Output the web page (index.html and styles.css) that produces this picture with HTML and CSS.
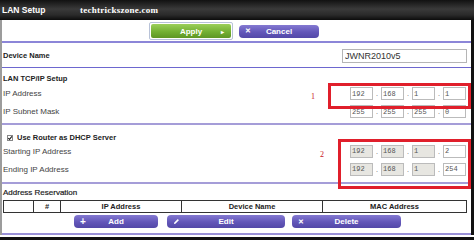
FILE: index.html
```html
<!DOCTYPE html>
<html>
  <head>
    <meta name="viewport" content="width=device-width, initial-scale=1.0" />
    <title>LAN Setup</title>
    <link rel="stylesheet" href="styles.css">
  </head>
  <body>
    <div class="page">
      <div class="topbar">
        <span class="title">LAN Setup</span>
        <span class="site">techtrickszone.com</span>
      </div>

      <div class="panel">
        <div class="actions">
          <span class="apply-wrap">
            <button class="btn green"><span></span><span class="label">Apply</span><span class="ico">&#9656;</span></button>
          </span>
          <button class="btn purple cancel"><span class="ico">&#10005;</span><span class="label">Cancel</span><span></span></button>
        </div>

        <div class="device">
          <span class="heading">Device Name</span>
          <input class="text-input" value="JWNR2010v5" />
        </div>

        <div class="lan">
          <div class="heading row-head">LAN TCP/IP Setup</div>
          <div class="ip-row">
            <span class="label-text">IP Address</span>
            <span class="ip">
              <input value="192" /><i>.</i><input value="168" /><i>.</i><input value="1" /><i>.</i><input value="1" />
            </span>
          </div>
          <div class="ip-row gap">
            <span class="label-text">IP Subnet Mask</span>
            <span class="ip">
              <input value="255" /><i>.</i><input value="255" /><i>.</i><input value="255" /><i>.</i><input value="0" />
            </span>
          </div>
        </div>

        <div class="dhcp">
          <div class="heading check-row">
            <svg class="check" width="6" height="6" viewBox="0 0 6 6">
              <rect x="0.5" y="0.5" width="5" height="5" fill="#fff" stroke="#888" />
              <path d="M1.2 3 L2.5 4.4 L4.9 1.3" fill="none" stroke="#222" stroke-width="1.1" />
            </svg>
            Use Router as DHCP Server
          </div>
          <div class="ip-row tight">
            <span class="label-text">Starting IP Address</span>
            <span class="ip">
              <input class="off" value="192" /><i>.</i><input class="off" value="168" /><i>.</i><input class="off" value="1" /><i>.</i><input value="2" />
            </span>
          </div>
          <div class="ip-row tight gap2">
            <span class="label-text">Ending IP Address</span>
            <span class="ip">
              <input class="off" value="192" /><i>.</i><input class="off" value="168" /><i>.</i><input class="off" value="1" /><i>.</i><input value="254" />
            </span>
          </div>
        </div>

        <div class="reserve">
          <div class="heading res-title">Address Reservation</div>
          <div class="table">
            <span></span><span>#</span><span>IP Address</span><span>Device Name</span><span>MAC Address</span>
          </div>
          <div class="res-buttons">
            <button class="btn purple add"><span class="ico">+</span><span class="label">Add</span><span></span></button>
            <button class="btn purple edit">
              <span class="ico">
                <svg width="7" height="7" viewBox="0 0 7 7"><path d="M1 6 L1.3 4.6 L4.8 1.1 L5.9 2.2 L2.4 5.7 Z" fill="#fff" /></svg>
              </span><span class="label">Edit</span><span></span>
            </button>
            <button class="btn purple delete"><span class="ico">&#10005;</span><span class="label">Delete</span><span></span></button>
          </div>
        </div>
      </div>
      <div class="footer"></div>

      <!-- annotations drawn over the screenshot -->
      <div class="mark mark-one"></div>
      <div class="mark mark-two"></div>
      <span class="num num-one">1</span>
      <span class="num num-two">2</span>
    </div>
  </body>
</html>
```

FILE: styles.css
```css
body {
  margin: 0;
  background: #fff;
  font-family: "Liberation Sans", Arial, sans-serif;
  font-size: 7.5px;
  color: #333;
}

.page {
  position: relative;
  width: 474px;
  height: 243px;
  overflow: hidden;
}

.topbar {
  height: 20px;
  display: flex;
  align-items: center;
  background: linear-gradient(#111 0%, #3a3a3a 45%, #2a2a2a 75%, #0c0c0c 100%);
  color: #fff;
  font-weight: bold;
}
.topbar .title {
  margin-left: 2px;
  font-size: 8.5px;
  width: 78px;
}
.topbar .site {
  font-family: "Liberation Serif", "Times New Roman", serif;
  font-size: 9px;
  letter-spacing: 0.25px;
}

.panel {
  border-left: 2px solid #9c9c9c;
  border-right: 3px solid #111;
  background: #fff;
}

/* top buttons */
.actions {
  height: 23px;
  box-sizing: border-box;
  display: flex;
  align-items: center;
  padding-left: 147px;
  padding-top: 1px;
  border-bottom: 2px solid #8c86d8;
}
.apply-wrap {
  border: 1px solid #b8c2d8;
  padding: 1px;
  border-radius: 2px;
  display: flex;
}
.btn {
  display: grid;
  grid-template-columns: 12px 1fr 12px;
  align-items: center;
  height: 14px;
  padding: 0 3px;
  border: none;
  border-radius: 4px;
  color: #fff;
  font-family: "Liberation Sans", Arial, sans-serif;
  font-weight: bold;
  font-size: 8px;
}
.btn .ico {
  display: flex;
  justify-content: center;
  font-size: 7px;
}
.btn .label {
  text-align: center;
}
.green {
  width: 80px;
  background: linear-gradient(#9ccf5a, #73b033 55%, #5e9624);
  border-radius: 2px;
}
.green .ico {
  font-size: 6px;
}
.purple {
  background: linear-gradient(#8479d2, #6256b8 55%, #5348a8);
}
.cancel {
  width: 80px;
  margin-left: 6px;
  height: 13px;
}

.heading {
  font-weight: bold;
  color: #222;
}
.label-text {
  color: #444;
  font-size: 8px;
}

/* device name */
.device {
  height: 25px;
  box-sizing: border-box;
  display: flex;
  align-items: center;
  justify-content: space-between;
  padding: 0 4px 0 1px;
  border-bottom: 1px solid #6d67cf;
}
.text-input {
  width: 125px;
  height: 14px;
  box-sizing: border-box;
  border: 1px solid #b5b5b5;
  padding: 0 2px;
  font-family: "Liberation Sans", Arial, sans-serif;
  font-size: 9px;
  color: #333;
  margin-top: 1px;
}

/* ip rows */
.lan {
  padding: 4px 0 4px 1px;
  border-bottom: 2px solid #a59dd8;
}
.row-head {
  height: 14px;
  line-height: 14px;
}
.ip-row {
  height: 15px;
  display: flex;
  align-items: center;
  justify-content: space-between;
  padding-right: 5px;
}
.ip-row.gap {
  margin-top: 3px;
}
.ip {
  display: flex;
  align-items: center;
}
.ip input {
  width: 23px;
  height: 13px;
  box-sizing: border-box;
  border: 1px solid #bbb;
  padding: 0 0 0 1px;
  font-family: "Liberation Mono", "Courier New", monospace;
  font-size: 7px;
  color: #555;
  background: #fff;
}
.ip input.off {
  background: #e7e6e1;
}
.ip i {
  width: 8px;
  text-align: center;
  font-style: normal;
  color: #555;
  font-size: 7px;
}

/* dhcp */
.dhcp {
  padding: 6px 0 6px 1px;
  border-bottom: 2px solid #a59dd8;
}
.check-row {
  height: 13px;
  display: flex;
  align-items: center;
}
.check {
  margin: 0 4px 0 4px;
}
.ip-row.tight {
  height: 14px;
}
.ip-row.gap2 {
  margin-top: 4px;
}

/* address reservation */
.reserve {
  padding: 3px 4px 5px 1px;
  border-bottom: 2px solid #9a91d8;
}
.res-title {
  height: 12px;
  line-height: 12px;
  font-weight: normal;
  font-size: 8px;
  color: #222;
  -webkit-text-stroke: 0.2px #222;
}
.table {
  margin-top: 1px;
  height: 13px;
  display: grid;
  grid-template-columns: 29px 27px 121px 141px 1fr;
  border: 1px solid #333;
  box-sizing: border-box;
  font-weight: bold;
  color: #222;
}
.table span {
  border-left: 1px solid #333;
  text-align: center;
  line-height: 11px;
}
.table span:first-child {
  border-left: none;
}
.res-buttons {
  margin-top: 2px;
  display: flex;
  padding-left: 71px;
}
.res-buttons .btn {
  height: 13px;
  font-size: 8px;
}
.add {
  width: 84px;
}
.add .ico {
  font-size: 10px;
}
.edit {
  width: 118px;
  margin-left: 9px;
}
.delete {
  width: 109px;
  margin-left: 7px;
}

.footer {
  height: 5px;
  background: linear-gradient(#fff 0, #fff 2px, #111 2px);
}

/* red annotations */
.mark {
  position: absolute;
  border: 3px solid #e01f2b;
  box-sizing: border-box;
}
.mark-one {
  left: 328px;
  top: 83px;
  width: 143px;
  height: 26px;
}
.mark-two {
  left: 338px;
  top: 139px;
  width: 133px;
  height: 50px;
}
.num {
  position: absolute;
  font-family: "Liberation Serif", "Times New Roman", serif;
  font-size: 8px;
  color: #c8141e;
}
.num-one {
  left: 311px;
  top: 92px;
}
.num-two {
  left: 320px;
  top: 150px;
}
```
